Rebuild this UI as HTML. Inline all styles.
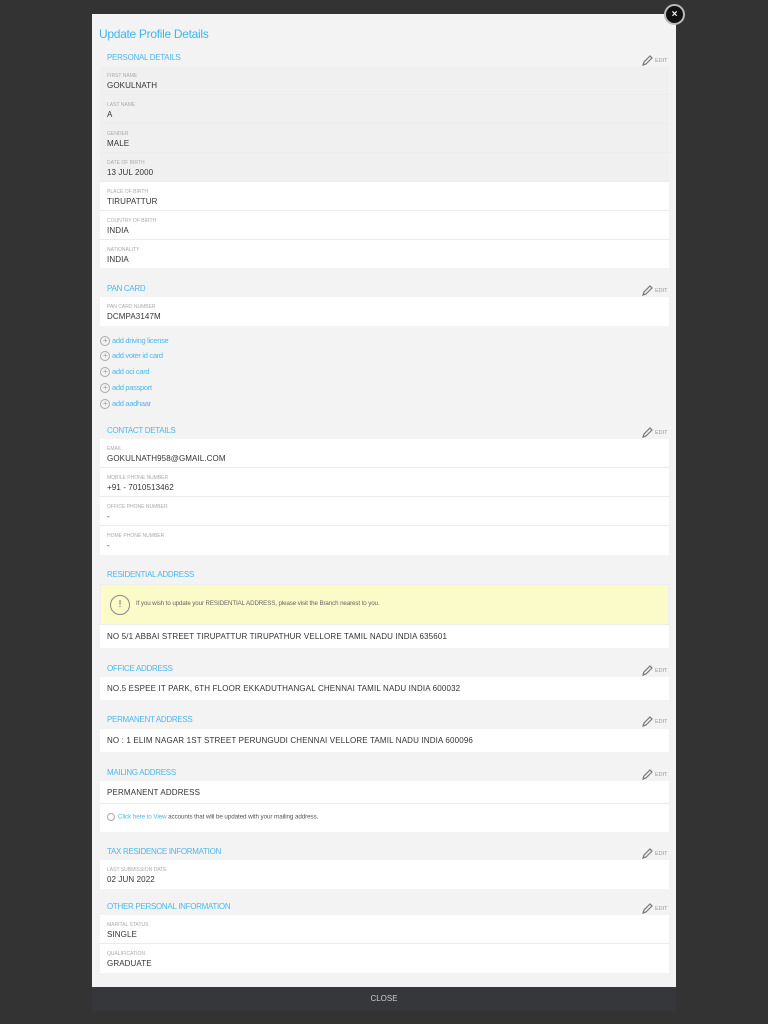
<!DOCTYPE html>
<html><head><meta charset="utf-8"><style>
*{margin:0;padding:0;box-sizing:border-box}
body{width:768px;height:1024px;background:#333;font-family:"Liberation Sans",sans-serif;position:relative;overflow:hidden}
.modal{position:absolute;left:92px;top:14px;width:584px;height:973px;background:#f3f3f3}
.foot{position:absolute;left:92px;top:987px;width:584px;height:24px;background:#35373a;color:#ccc;font-size:8px;text-align:center;line-height:24px}
.a{position:absolute}
.t{left:99px;top:27px;font-size:12px;color:#3db7ef;letter-spacing:-0.3px}
.h{left:107px;font-size:8px;color:#4ab8ee;letter-spacing:-0.3px}
.box{position:absolute;left:100px;width:569px;background:#fff}
.row{height:29px;border-bottom:1px solid #ececec;padding:7px 0 0 7px;position:relative}
.row.g{background:#f0f0f0}
.l{font-size:5px;color:#aaa;line-height:6px}
.v{font-size:8px;color:#333;line-height:11px;margin-top:1px;letter-spacing:0.1px}
.edit{position:absolute;left:642px;font-size:5.5px;color:#999}
.edit svg{vertical-align:middle;margin-right:2px}
.add{left:100px;font-size:7.5px;color:#4ab8ee;letter-spacing:-0.3px}
.add i{display:inline-block;width:10px;height:10px;border:1px solid #aaa;border-radius:50%;font-style:normal;color:#999;font-size:8px;line-height:8px;text-align:center;vertical-align:middle;margin-right:2px}
.x{left:664px;top:4px;width:21px;height:21px;border-radius:50%;background:#111;border:2px solid #bbb;color:#fff;font-size:10px;font-weight:bold;text-align:center;line-height:17px}
.one{height:23px;padding:0 0 0 7px;font-size:8px;color:#333;line-height:23px;letter-spacing:0.15px}
</style></head><body>
<div class="modal"></div>
<div class="a x">×</div>
<div class="a t">Update Profile Details</div>

<div class="a h" style="top:53px">PERSONAL DETAILS</div>
<div class="edit" style="top:55px"><svg width="11" height="11" viewBox="0 0 11 11"><path d="M1 10 L2 7 L8 1 L10 3 L4 9 Z" fill="none" stroke="#777" stroke-width="1.2"/></svg>EDIT</div>
<div class="box" style="top:66px">
<div class="row g"><div class="l">FIRST NAME</div><div class="v">GOKULNATH</div></div>
<div class="row g"><div class="l">LAST NAME</div><div class="v">A</div></div>
<div class="row g"><div class="l">GENDER</div><div class="v">MALE</div></div>
<div class="row g"><div class="l">DATE OF BIRTH</div><div class="v">13 JUL 2000</div></div>
<div class="row"><div class="l">PLACE OF BIRTH</div><div class="v">TIRUPATTUR</div></div>
<div class="row"><div class="l">COUNTRY OF BIRTH</div><div class="v">INDIA</div></div>
<div class="row" style="height:28px;border:0"><div class="l">NATIONALITY</div><div class="v">INDIA</div></div>
</div>

<div class="a h" style="top:284px">PAN CARD</div>
<div class="edit" style="top:285px"><svg width="11" height="11" viewBox="0 0 11 11"><path d="M1 10 L2 7 L8 1 L10 3 L4 9 Z" fill="none" stroke="#777" stroke-width="1.2"/></svg>EDIT</div>
<div class="box" style="top:297px"><div class="row" style="border:0"><div class="l">PAN CARD NUMBER</div><div class="v">DCMPA3147M</div></div></div>

<div class="a add" style="top:336px"><i>+</i>add driving license</div>
<div class="a add" style="top:351px"><i>+</i>add voter id card</div>
<div class="a add" style="top:367px"><i>+</i>add oci card</div>
<div class="a add" style="top:383px"><i>+</i>add passport</div>
<div class="a add" style="top:399px"><i>+</i>add aadhaar</div>

<div class="a h" style="top:426px">CONTACT DETAILS</div>
<div class="edit" style="top:427px"><svg width="11" height="11" viewBox="0 0 11 11"><path d="M1 10 L2 7 L8 1 L10 3 L4 9 Z" fill="none" stroke="#777" stroke-width="1.2"/></svg>EDIT</div>
<div class="box" style="top:439px">
<div class="row"><div class="l">EMAIL</div><div class="v">GOKULNATH958@GMAIL.COM</div></div>
<div class="row"><div class="l">MOBILE PHONE NUMBER</div><div class="v">+91 - 7010513462</div></div>
<div class="row"><div class="l">OFFICE PHONE NUMBER</div><div class="v">-</div></div>
<div class="row" style="border:0"><div class="l">HOME PHONE NUMBER</div><div class="v">-</div></div>
</div>

<div class="a h" style="top:570px">RESIDENTIAL ADDRESS</div>
<div class="box" style="top:584px;height:41px;background:#fafbc8;border:1px solid #eee">
<div class="a" style="left:9px;top:10px;width:20px;height:20px;border:1px solid #888;border-radius:50%;text-align:center;font-size:10px;line-height:18px;color:#666">!</div>
<div class="a" style="left:35px;top:15px;font-size:6.2px;color:#666;letter-spacing:-0.1px">If you wish to update your RESIDENTIAL ADDRESS, please visit the Branch nearest to you.</div>
</div>
<div class="box one" style="top:625px">NO 5/1 ABBAI STREET TIRUPATTUR TIRUPATHUR VELLORE TAMIL NADU INDIA 635601</div>

<div class="a h" style="top:664px">OFFICE ADDRESS</div>
<div class="edit" style="top:665px"><svg width="11" height="11" viewBox="0 0 11 11"><path d="M1 10 L2 7 L8 1 L10 3 L4 9 Z" fill="none" stroke="#777" stroke-width="1.2"/></svg>EDIT</div>
<div class="box one" style="top:677px">NO.5 ESPEE IT PARK, 6TH FLOOR EKKADUTHANGAL CHENNAI TAMIL NADU INDIA 600032</div>

<div class="a h" style="top:715px">PERMANENT ADDRESS</div>
<div class="edit" style="top:716px"><svg width="11" height="11" viewBox="0 0 11 11"><path d="M1 10 L2 7 L8 1 L10 3 L4 9 Z" fill="none" stroke="#777" stroke-width="1.2"/></svg>EDIT</div>
<div class="box one" style="top:729px">NO : 1 ELIM NAGAR 1ST STREET PERUNGUDI CHENNAI VELLORE TAMIL NADU INDIA 600096</div>

<div class="a h" style="top:768px">MAILING ADDRESS</div>
<div class="edit" style="top:769px"><svg width="11" height="11" viewBox="0 0 11 11"><path d="M1 10 L2 7 L8 1 L10 3 L4 9 Z" fill="none" stroke="#777" stroke-width="1.2"/></svg>EDIT</div>
<div class="box" style="top:781px;height:51px">
<div class="one" style="border-bottom:1px solid #ececec">PERMANENT ADDRESS</div>
<div class="a" style="left:7px;top:32px;font-size:6.3px;color:#555;letter-spacing:-0.1px"><span style="display:inline-block;width:8px;height:8px;border:1px solid #aaa;border-radius:50%;vertical-align:middle;margin-right:3px"></span><span style="color:#4ab8ee">Click here to View</span> accounts that will be updated with your mailing address.</div>
</div>

<div class="a h" style="top:847px">TAX RESIDENCE INFORMATION</div>
<div class="edit" style="top:848px"><svg width="11" height="11" viewBox="0 0 11 11"><path d="M1 10 L2 7 L8 1 L10 3 L4 9 Z" fill="none" stroke="#777" stroke-width="1.2"/></svg>EDIT</div>
<div class="box" style="top:860px"><div class="row" style="border:0"><div class="l">LAST SUBMISSION DATE</div><div class="v">02 JUN 2022</div></div></div>

<div class="a h" style="top:902px">OTHER PERSONAL INFORMATION</div>
<div class="edit" style="top:903px"><svg width="11" height="11" viewBox="0 0 11 11"><path d="M1 10 L2 7 L8 1 L10 3 L4 9 Z" fill="none" stroke="#777" stroke-width="1.2"/></svg>EDIT</div>
<div class="box" style="top:915px">
<div class="row"><div class="l">MARITAL STATUS</div><div class="v">SINGLE</div></div>
<div class="row" style="border:0"><div class="l">QUALIFICATION</div><div class="v">GRADUATE</div></div>
</div>

<div class="foot">CLOSE</div>
</body></html>
